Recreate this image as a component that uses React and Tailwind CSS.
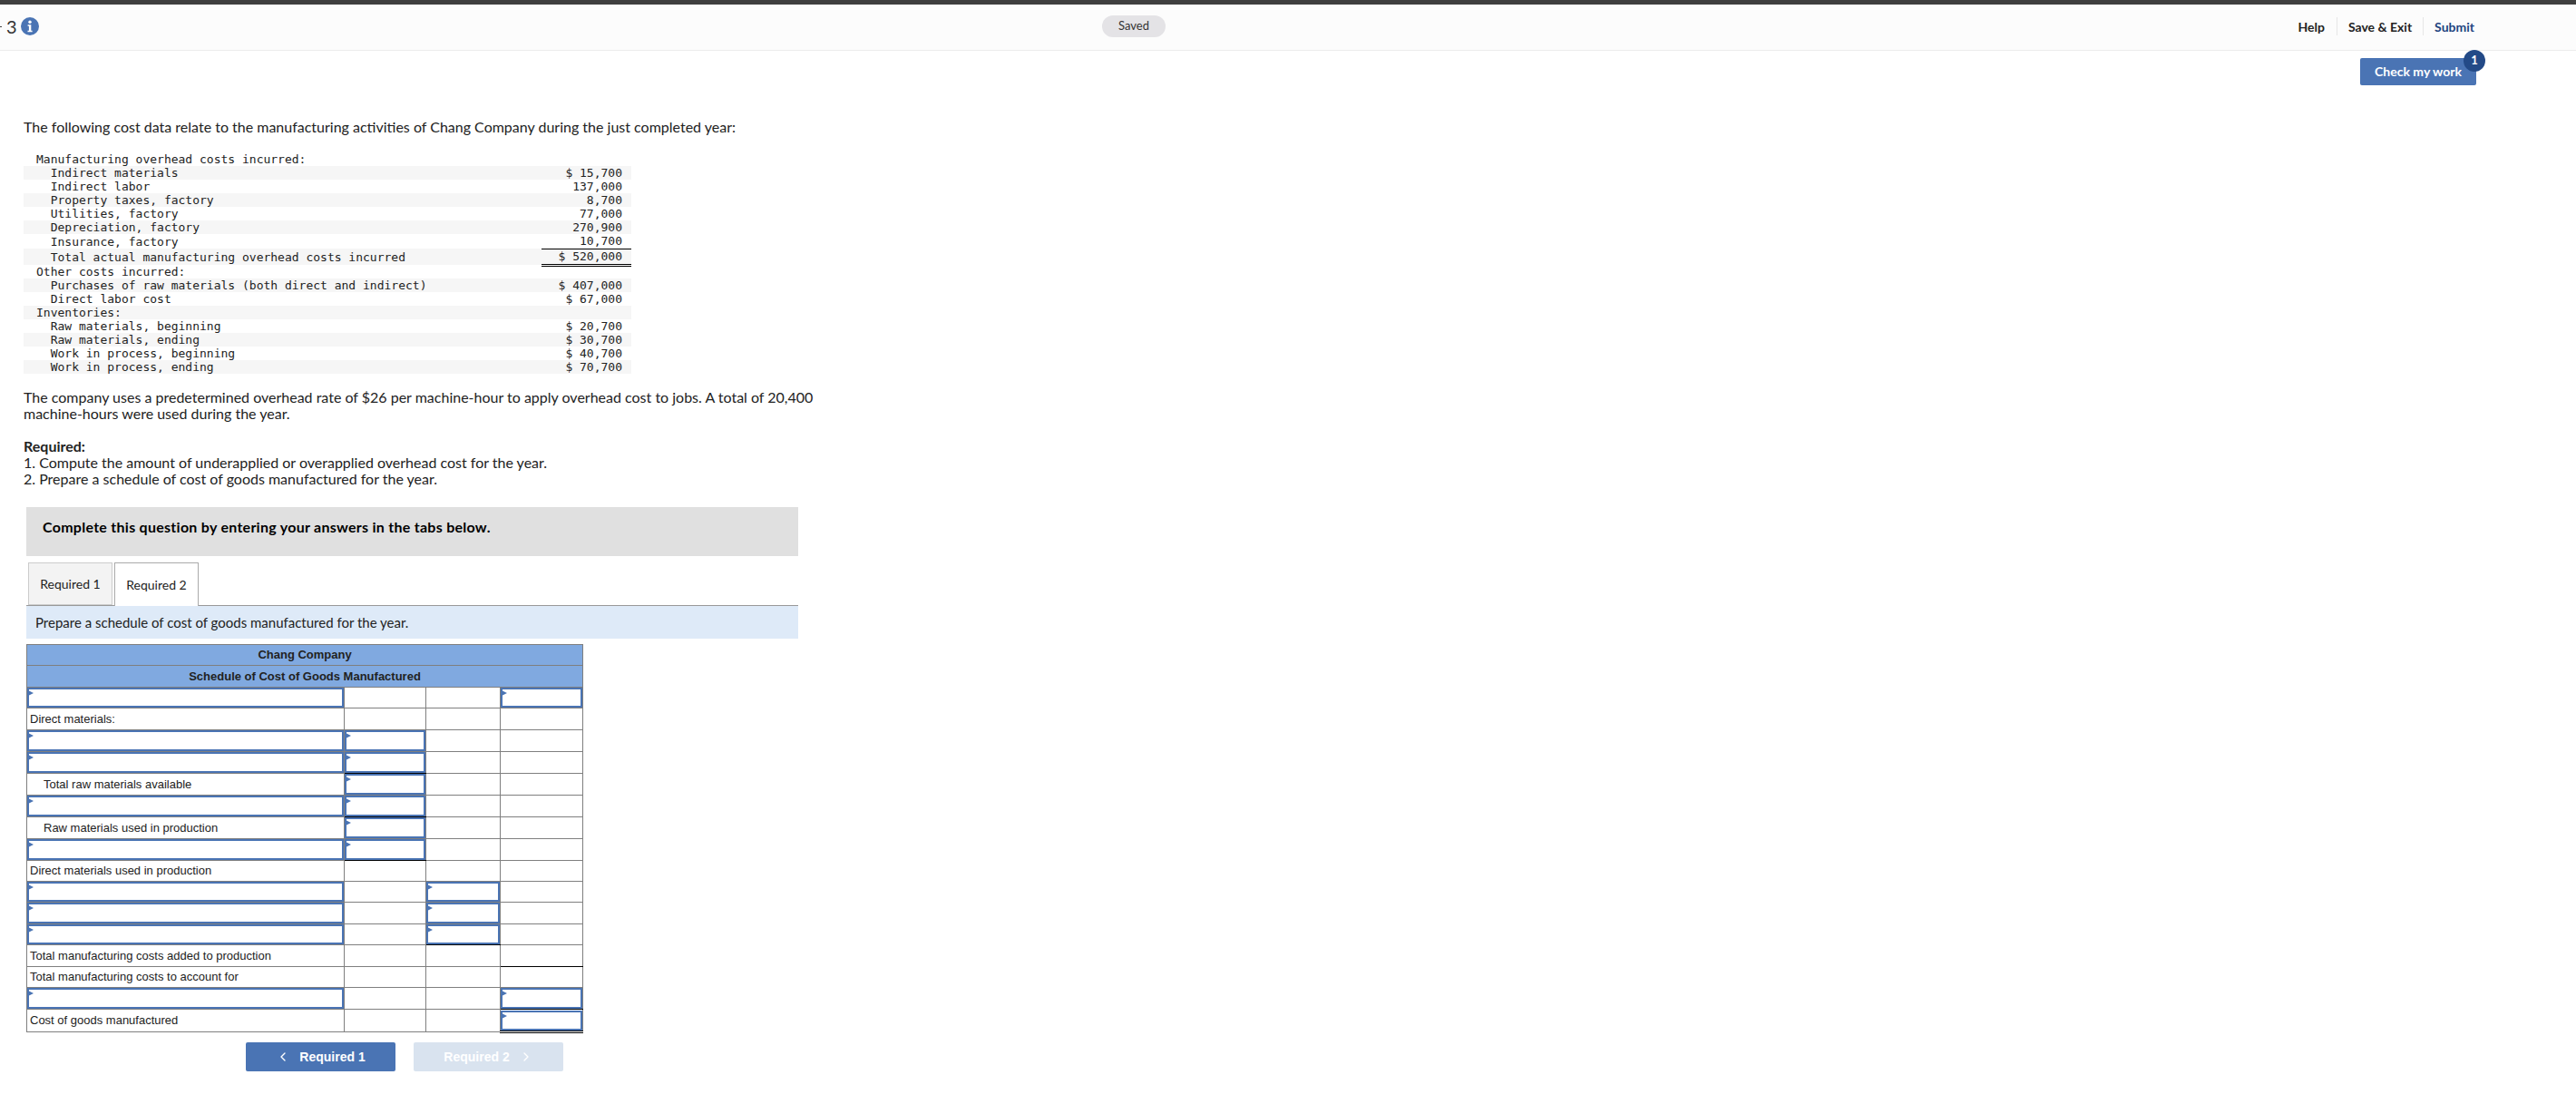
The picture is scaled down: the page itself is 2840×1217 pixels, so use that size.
import React from "react";
import { ChevronLeft, ChevronRight } from "lucide-react";

const cost = [
  { label: "Manufacturing overhead costs incurred:", h: "h-[15px]" },
  { label: "  Indirect materials", v: "$ 15,700", s: 1, h: "h-[15px]" },
  { label: "  Indirect labor", v: "137,000", h: "h-[15px]" },
  { label: "  Property taxes, factory", v: "8,700", s: 1, h: "h-[15px]" },
  { label: "  Utilities, factory", v: "77,000", h: "h-[15px]" },
  { label: "  Depreciation, factory", v: "270,900", s: 1, h: "h-[15px]" },
  { label: "  Insurance, factory", v: "10,700", h: "h-[16px]" },
  { label: "  Total actual manufacturing overhead costs incurred", v: "$ 520,000", s: 1, h: "h-[18px]", total: 1 },
  { label: "Other costs incurred:", h: "h-[15px]" },
  { label: "  Purchases of raw materials (both direct and indirect)", v: "$ 407,000", s: 1, h: "h-[15px]" },
  { label: "  Direct labor cost", v: "$ 67,000", h: "h-[15px]" },
  { label: "Inventories:", s: 1, h: "h-[15px]" },
  { label: "  Raw materials, beginning", v: "$ 20,700", h: "h-[15px]" },
  { label: "  Raw materials, ending", v: "$ 30,700", s: 1, h: "h-[15px]" },
  { label: "  Work in process, beginning", v: "$ 40,700", h: "h-[15px]" },
  { label: "  Work in process, ending", v: "$ 70,700", s: 1, h: "h-[15px]" },
];

const sched = [
  { h: "h-[23px]", ih: "h-[22px]", inputs: [0, 3] },
  { h: "h-[24px]", ih: "h-[23px]", label: "Direct materials:", inputs: [] },
  { h: "h-[24px]", ih: "h-[23px]", inputs: [0, 1] },
  { h: "h-[24px]", ih: "h-[23px]", inputs: [0, 1], rule: 1 },
  { h: "h-[24px]", ih: "h-[23px]", label: "Total raw materials available", indent: 1, inputs: [1] },
  { h: "h-[24px]", ih: "h-[23px]", inputs: [0, 1], rule: 1 },
  { h: "h-[24px]", ih: "h-[23px]", label: "Raw materials used in production", indent: 1, inputs: [1] },
  { h: "h-[24px]", ih: "h-[23px]", inputs: [0, 1], rule: 1 },
  { h: "h-[23px]", ih: "h-[22px]", label: "Direct materials used in production", inputs: [] },
  { h: "h-[23px]", ih: "h-[22px]", inputs: [0, 2] },
  { h: "h-[24px]", ih: "h-[23px]", inputs: [0, 2] },
  { h: "h-[23px]", ih: "h-[22px]", inputs: [0, 2], rule: 2 },
  { h: "h-[24px]", ih: "h-[23px]", label: "Total manufacturing costs added to production", inputs: [], rule: 3 },
  { h: "h-[23px]", ih: "h-[22px]", label: "Total manufacturing costs to account for", inputs: [] },
  { h: "h-[24px]", ih: "h-[23px]", inputs: [0, 3], rule: 3 },
  { h: "h-[25px]", ih: "h-[22px]", label: "Cost of goods manufactured", inputs: [3], rule: 3, dbl: 1 },
];

function Input({ ih }) {
  return (
    <div className={`relative w-full border-2 border-[#4a74b4] bg-white ${ih}`}>
      <span className="absolute left-[-1px] top-px h-0 w-0 border-y-[3px] border-l-[6px] border-y-transparent border-l-[#4a74b4]" />
    </div>
  );
}

function InfoIcon() {
  return (
    <svg width="20" height="20" viewBox="0 0 20 20" aria-hidden="true">
      <circle cx="10" cy="10" r="10" fill="#4a74b4" />
      <circle cx="10" cy="5.2" r="1.7" fill="#fff" />
      <path d="M7.6 8.2h3.7v6.6h1.3v1.5H7.5v-1.5h1.4V9.7H7.6z" fill="#fff" />
    </svg>
  );
}

export default function App() {
  return (
    <div className="h-[1217px] w-[2840px] overflow-hidden bg-white font-['Lato',sans-serif] text-[#222]">
      <header className="flex h-[56px] items-center border-t-[5px] border-b border-t-[#3f3f3f] border-b-[#ececec] bg-[#fcfcfc] pb-[2px]">
        <div className="flex w-[1215px] items-center">
          <span className="h-px w-[2px] bg-[#444]" />
          <span className="ml-[5px] text-[20px] leading-none text-[#333]">3</span>
          <span className="ml-[4px] flex"><InfoIcon /></span>
        </div>
        <div className="flex h-[24px] w-[70px] items-center justify-center rounded-full bg-[#e4e3e6] text-[13px] text-[#333]">Saved</div>
        <nav className="ml-auto mr-[112px] flex items-center text-[14px] font-bold">
          <span className="pr-[13px]">Help</span>
          <span className="h-[20px] w-px bg-[#e6e6e6]" />
          <span className="px-[12px]">Save &amp; Exit</span>
          <span className="h-[20px] w-px bg-[#e6e6e6]" />
          <span className="pl-[12px] text-[#1f4480]">Submit</span>
        </nav>
      </header>

      <div className="flex justify-end pr-[110px] pt-[8px]">
        <button className="relative h-[30px] w-[128px] rounded-[2px] bg-[#4a74b4] pb-[2px] text-[14px] font-bold text-white">
          Check my work
          <span className="absolute right-[-10px] top-[-9px] flex h-[24px] w-[24px] items-center justify-center rounded-full bg-[#234a87] text-[13px] font-bold text-white">1</span>
        </button>
      </div>

      <main className="pl-[26px]">
        <p className="mt-[37px] text-[16px] leading-[18px]">The following cost data relate to the manufacturing activities of Chang Company during the just completed year:</p>

        <table className="mt-[19px] w-[670px] table-fixed border-collapse font-['DejaVu_Sans_Mono',monospace] text-[13px] leading-[15px] text-[#222]">
          <colgroup>
            <col className="w-[571px]" />
            <col className="w-[99px]" />
          </colgroup>
          <tbody>
            {cost.map((r, i) => (
              <tr key={i} className={`${r.h} ${r.s ? "bg-[#f6f6f6]" : ""}`}>
                <td className="whitespace-pre p-0 pl-[14px]">{r.label}</td>
                <td className={`whitespace-pre p-0 pr-[10px] text-right ${r.total ? "border-t border-b-[3px] border-t-black border-b-black [border-bottom-style:double]" : ""}`}>{r.v}</td>
              </tr>
            ))}
          </tbody>
        </table>

        <p className="mt-[17px] whitespace-nowrap text-[16px] leading-[18px]">
          The company uses a predetermined overhead rate of $26 per machine-hour to apply overhead cost to jobs. A total of 20,400
          <br />
          machine-hours were used during the year.
        </p>

        <div className="mt-[18px] text-[16px] leading-[18px]">
          <p className="font-bold">Required:</p>
          <p>1. Compute the amount of underapplied or overapplied overhead cost for the year.</p>
          <p>2. Prepare a schedule of cost of goods manufactured for the year.</p>
        </div>

        <section className="ml-[3px] w-[851px]">
          <div className="mt-[22px] h-[54px] bg-[#e0e0e0] pl-[18px] pt-[13px] text-[16px] font-bold leading-[18px] tracking-[0.27px] text-black">
            Complete this question by entering your answers in the tabs below.
          </div>

          <div className="mt-[7px] flex h-[48px] gap-[2px] border-b border-b-[#999] pl-[2px]">
            <div className="flex h-[47px] w-[93px] items-center justify-center border border-[#ccc] bg-[#f3f3f3] text-[14px]">Required 1</div>
            <div className="flex h-[48px] w-[93px] items-center justify-center border border-b-0 border-[#aaa] bg-white text-[14px]">Required 2</div>
          </div>

          <div className="flex h-[36px] items-center bg-[#deeaf8] pl-[10px] text-[15px]">Prepare a schedule of cost of goods manufactured for the year.</div>

          <table className="mt-[6px] w-[613px] table-fixed border-collapse font-['Liberation_Sans',sans-serif] text-[13px] text-[#222]">
            <colgroup>
              <col className="w-[350px]" />
              <col className="w-[90px]" />
              <col className="w-[82px]" />
              <col className="w-[91px]" />
            </colgroup>
            <thead>
              <tr className="h-[23px] bg-[#80a9e0]">
                <th colSpan={4} className="border border-[#7f7f7f] p-0 font-bold">Chang Company</th>
              </tr>
              <tr className="h-[24px] bg-[#80a9e0]">
                <th colSpan={4} className="border border-[#7f7f7f] p-0 font-bold">Schedule of Cost of Goods Manufactured</th>
              </tr>
            </thead>
            <tbody>
              {sched.map((r, i) => (
                <tr key={i} className={r.h}>
                  {[0, 1, 2, 3].map((c) => {
                    let bottom = "border-b-[#7f7f7f]";
                    if (r.rule === c) bottom = r.dbl ? "border-b-[3px] border-b-black [border-bottom-style:double]" : "border-b-black";
                    return (
                      <td key={c} className={`border border-[#7f7f7f] p-0 ${bottom}`}>
                        {r.inputs.includes(c) ? (
                          <Input ih={r.ih} />
                        ) : c === 0 && r.label ? (
                          <span className={`block ${r.indent ? "pl-[18px]" : "pl-[3px]"}`}>{r.label}</span>
                        ) : null}
                      </td>
                    );
                  })}
                </tr>
              ))}
            </tbody>
          </table>

          <div className="mt-[10px] flex gap-[20px] pl-[242px] font-['Liberation_Sans',sans-serif] text-[14px] font-bold text-white">
            <button className="flex h-[32px] w-[165px] items-center justify-center gap-[10px] rounded-[2px] bg-[#4a74b4]">
              <ChevronLeft size={16} strokeWidth={2} />
              Required 1
            </button>
            <button className="flex h-[32px] w-[165px] items-center justify-center gap-[10px] rounded-[2px] bg-[#d9e3ef]">
              Required 2
              <ChevronRight size={16} strokeWidth={2} />
            </button>
          </div>
        </section>
      </main>
    </div>
  );
}
